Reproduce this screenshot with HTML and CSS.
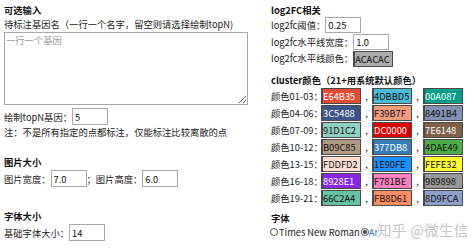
FILE: index.html
```html
<!DOCTYPE html>
<html lang="zh-CN">
<head>
    <meta charset="UTF-8">
    <title>火山图参数</title>
    <link rel="stylesheet" href="styles.css">
</head>
<body>
    <div class="page">
        <div class="col col-left">
            <div class="title">可选输入</div>
            <div class="line">待标注基因名（一行一个名字，留空则请选择绘制topN)</div>
            <textarea class="genes" placeholder="一行一个基因"></textarea>
            <div class="row row-topn">绘制topN基因：<input class="num" type="text" value="5"></div>
            <div class="line">注：不是所有指定的点都标注，仅能标注比较离散的点</div>

            <div class="title sec-img">图片大小</div>
            <div class="row">图片宽度：<input class="num" type="text" value="7.0">；图片高度：<input class="num" type="text" value="6.0"></div>

            <div class="title sec-font">字体大小</div>
            <div class="row">基础字体大小：<input class="num" type="text" value="14"></div>
        </div>

        <div class="col col-right">
            <div class="title">log2FC相关</div>
            <div class="row row-fc">log2fc阈值：<input class="num" type="text" value="0.25"></div>
            <div class="row row-fc">log2fc水平线宽度：<input class="num" type="text" value="1.0"></div>
            <div class="row row-fc">log2fc水平线颜色：<span class="swatch swatch-line">ACACAC</span></div>

            <div class="title sec-cluster">cluster颜色（21+用系统默认颜色）</div>
            <div class="colors">
                <div class="crow">
                    <span class="clabel">颜色01-03：</span>
                    <span class="swatch light" style="background:#E64B35">E64B35</span><span class="sep">,</span>
                    <span class="swatch" style="background:#4DBBD5">4DBBD5</span><span class="sep">,</span>
                    <span class="swatch light" style="background:#00A087">00A087</span>
                </div>
                <div class="crow">
                    <span class="clabel">颜色04-06：</span>
                    <span class="swatch light" style="background:#3C5488">3C5488</span><span class="sep">,</span>
                    <span class="swatch" style="background:#F39B7F">F39B7F</span><span class="sep">,</span>
                    <span class="swatch" style="background:#8491B4">8491B4</span>
                </div>
                <div class="crow">
                    <span class="clabel">颜色07-09：</span>
                    <span class="swatch" style="background:#91D1C2">91D1C2</span><span class="sep">,</span>
                    <span class="swatch light" style="background:#DC0000">DC0000</span><span class="sep">,</span>
                    <span class="swatch light" style="background:#7E6148">7E6148</span>
                </div>
                <div class="crow">
                    <span class="clabel">颜色10-12：</span>
                    <span class="swatch" style="background:#B09C85">B09C85</span><span class="sep">,</span>
                    <span class="swatch light" style="background:#377DB8">377DB8</span><span class="sep">,</span>
                    <span class="swatch" style="background:#4DAE49">4DAE49</span>
                </div>
                <div class="crow">
                    <span class="clabel">颜色13-15：</span>
                    <span class="swatch" style="background:#FDDFD2">FDDFD2</span><span class="sep">,</span>
                    <span class="swatch" style="background:#1E90FE">1E90FE</span><span class="sep">,</span>
                    <span class="swatch" style="background:#FEFE32">FEFE32</span>
                </div>
                <div class="crow">
                    <span class="clabel">颜色16-18：</span>
                    <span class="swatch light" style="background:#8928E1">8928E1</span><span class="sep">,</span>
                    <span class="swatch" style="background:#F781BE">F781BE</span><span class="sep">,</span>
                    <span class="swatch" style="background:#989898">989898</span>
                </div>
                <div class="crow">
                    <span class="clabel">颜色19-21：</span>
                    <span class="swatch" style="background:#66C2A4">66C2A4</span><span class="sep">,</span>
                    <span class="swatch" style="background:#FB8D61">FB8D61</span><span class="sep">,</span>
                    <span class="swatch" style="background:#8D9FCA">8D9FCA</span>
                </div>
            </div>

            <div class="title sec-fontfam">字体</div>
            <div class="radios">
                <span class="radio"></span><span class="rlabel">Times New Roman</span>
                <span class="radio checked"></span><span class="rlabel active">Arial</span>
            </div>
        </div>

        <div class="watermark">知乎 @微生信</div>
    </div>
</body>
</html>
```

FILE: styles.css
```css
* {
    margin: 0;
    padding: 0;
    box-sizing: border-box;
}

body {
    font-family: 'Noto Sans CJK SC', sans-serif;
    font-size: 9.3px;
    line-height: 14px;
    color: #222;
    background: #fff;
}

.page {
    display: flex;
    padding: 3px 0 0 4px;
    position: relative;
    height: 250px;
    overflow: hidden;
}

.col-left {
    width: 244px;
}

.col-right {
    margin-left: 23px;
    width: 200px;
}

.title {
    font-weight: 700;
    color: #111;
}

.line {
    white-space: nowrap;
}

.genes {
    display: block;
    width: 244px;
    height: 73px;
    margin-top: 1px;
    border: 1px solid #a9a9a9;
    font-family: inherit;
    font-size: 9.3px;
    line-height: 13px;
    padding: 1px 1px;
    color: #222;
}

.genes::placeholder {
    color: #999;
}

.row {
    display: flex;
    align-items: center;
    height: 17px;
    white-space: nowrap;
}

.row-topn {
    margin-top: 3px;
}

.num {
    width: 36px;
    height: 17px;
    border: 1px solid #a9a9a9;
    font-family: inherit;
    font-size: 9.3px;
    padding: 0 2px;
    color: #111;
    background: #fff;
}

.sec-img {
    margin-top: 16px;
}

.sec-img + .row {
    margin-top: 1px;
}

.sec-font {
    margin-top: 22px;
}

.sec-font + .row {
    margin-top: 1px;
}

.row-fc {
    height: 16.5px;
}

.row-fc .num {
    height: 16px;
}

.swatch {
    display: inline-block;
    width: 40px;
    height: 16px;
    line-height: 14px;
    border: 1px solid #4a4a4a;
    border-left-width: 2px;
    color: #111;
    overflow: hidden;
    white-space: nowrap;
}

.swatch.light {
    color: #fff;
}

.swatch-line {
    background: #acacac;
    margin-top: 1px;
}

.sec-cluster {
    margin-top: 6px;
}

.colors {
    margin-top: 1px;
}

.crow {
    display: flex;
    align-items: center;
    height: 17px;
    white-space: nowrap;
}

.clabel {
    width: 50px;
}

.sep {
    width: 11px;
    text-align: center;
    line-height: 18px;
}

.sec-fontfam {
    margin-top: 4px;
}

.radios {
    display: flex;
    align-items: center;
    height: 14px;
    font-size: 9.3px;
    white-space: nowrap;
    margin-left: -1px;
}

.radio {
    width: 8px;
    height: 8px;
    border: 1px solid #555;
    border-radius: 50%;
    margin-right: 1px;
    position: relative;
    flex-shrink: 0;
}

.radio.checked {
    margin-right: 0;
}

.radio.checked::after {
    content: '';
    position: absolute;
    top: 1px;
    left: 1px;
    width: 4px;
    height: 4px;
    border-radius: 50%;
    background: #444;
}

.rlabel {
    margin-right: 1px;
}

.rlabel.active {
    color: #1a6fd0;
    margin-right: 0;
}

.watermark {
    position: absolute;
    left: 377px;
    top: 220px;
    font-size: 14.5px;
    line-height: 20px;
    color: #c6c6c6;
    background: #fff;
    padding: 0 1px 0 0;
    letter-spacing: 0.3px;
}
```
